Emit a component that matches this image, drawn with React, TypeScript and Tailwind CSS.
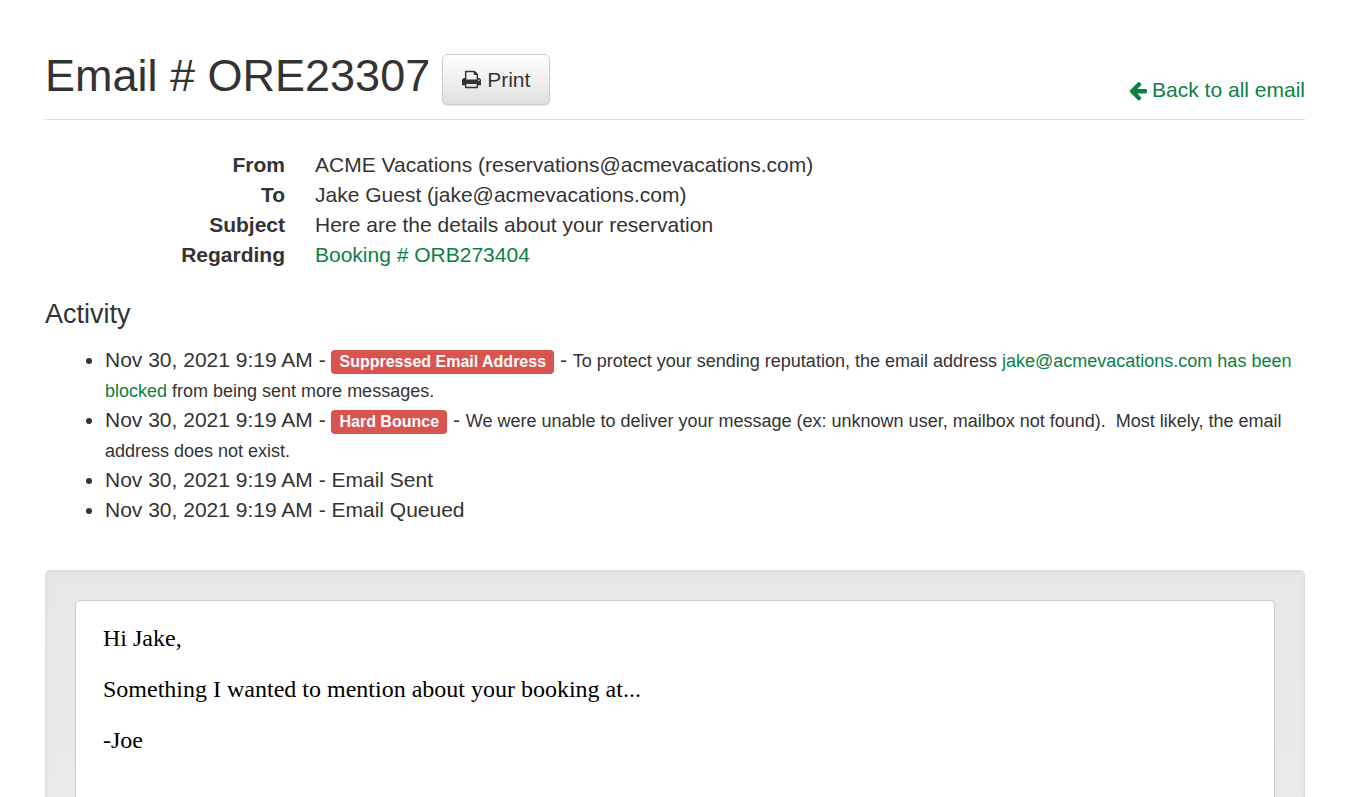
import React from 'react';

type Detail = {
  label: string;
  value: string;
  href?: string;
};

const details: Detail[] = [
  { label: 'From', value: 'ACME Vacations (reservations@acmevacations.com)' },
  { label: 'To', value: 'Jake Guest (jake@acmevacations.com)' },
  { label: 'Subject', value: 'Here are the details about your reservation' },
  { label: 'Regarding', value: 'Booking # ORB273404', href: '#booking' },
];

function PrintIcon() {
  return (
    <svg viewBox="64 0 1664 1792" className="h-[21px] w-[19px] fill-current" aria-hidden="true">
      <path d="M448 1536h896v-256h-896v256zm0-640h896v-384h-160q-40 0-68-28t-28-68v-160h-640v640zm1152 64q0-26-19-45t-45-19-45 19-19 45 19 45 45 19 45-19 19-45zm128 0v416q0 13-9.5 22.5t-22.5 9.5h-224v160q0 40-28 68t-68 28h-960q-40 0-68-28t-28-68v-160h-224q-13 0-22.5-9.5t-9.5-22.5v-416q0-79 56.5-135.5t135.5-56.5h64v-544q0-40 28-68t68-28h672q40 0 88 20t76 48l152 152q28 28 48 76t20 88v256h64q79 0 135.5 56.5t56.5 135.5z" />
    </svg>
  );
}

function ArrowLeftIcon() {
  return (
    <svg viewBox="128 0 1536 1792" className="h-[21px] w-[18px] fill-current" aria-hidden="true">
      <path d="M1664 896v128q0 53-32.5 90.5t-84.5 37.5h-704l293 294q38 36 38 90t-38 90l-75 76q-37 37-90 37-52 0-91-37l-651-652q-37-37-37-90 0-52 37-91l651-650q38-38 91-38 52 0 90 38l75 74q38 38 38 91t-38 91l-293 293h704q52 0 84.5 37.5t32.5 90.5z" />
    </svg>
  );
}

function Badge({ children }: { children: React.ReactNode }) {
  return (
    <span className="rounded-[4px] bg-[#d9534f] px-[8px] pt-[3px] pb-[4px] text-[16px] leading-none font-bold text-white">
      {children}
    </span>
  );
}

export default function App() {
  return (
    <div className="min-h-screen bg-white pt-[47px] pr-[44px] pl-[45px] font-['Liberation_Sans',Arial,sans-serif] text-[21px] leading-[30px] text-[#333]">
      <header className="flex items-end justify-between border-b border-[#ddd] pb-[14px]">
        <div className="flex items-end gap-[12px]">
          <h1 className="text-[45px] leading-[58px]">Email # ORE23307</h1>
          <button
            type="button"
            onClick={() => window.print()}
            className="flex h-[51px] items-center gap-[6px] rounded-[5px] border border-[#ccc] bg-linear-to-b from-white to-[#e0e0e0] px-[19px] shadow-[0_1px_2px_rgba(0,0,0,0.1)] [text-shadow:0_1px_1px_rgba(255,255,255,0.75)]"
          >
            <PrintIcon />
            Print
          </button>
        </div>
        <a href="#emails" className="flex items-center gap-[5px] text-[#0c8043]">
          <ArrowLeftIcon />
          Back to all email
        </a>
      </header>

      <dl className="mt-[30px]">
        {details.map((item) => (
          <div key={item.label} className="flex gap-[30px]">
            <dt className="w-[240px] text-right font-bold">{item.label}</dt>
            <dd>
              {item.href ? <a href={item.href} className="text-[#0c8043]">{item.value}</a> : item.value}
            </dd>
          </div>
        ))}
      </dl>

      <h2 className="mt-[28px] text-[27px] leading-[32px]">Activity</h2>
      <ul className="mt-[15px] list-disc pl-[60px]">
        <li>
          Nov 30, 2021 9:19 AM - <Badge>Suppressed Email Address</Badge> -{' '}
          <span className="text-[18px] leading-none">
            To protect your sending reputation, the email address{' '}
            <a href="#blocked" className="text-[#0c8043]">jake@acmevacations.com has been blocked</a> from
            being sent more messages.
          </span>
        </li>
        <li>
          Nov 30, 2021 9:19 AM - <Badge>Hard Bounce</Badge> -{' '}
          <span className="text-[18px] leading-none">
            We were unable to deliver your message (ex: unknown user, mailbox not found).&nbsp; Most
            likely, the email address does not exist.
          </span>
        </li>
        <li>Nov 30, 2021 9:19 AM - Email Sent</li>
        <li>Nov 30, 2021 9:19 AM - Email Queued</li>
      </ul>

      {/* Message preview */}
      <section className="mt-[45px] rounded-[5px] border border-[#dcdcdc] bg-linear-to-b from-[#e7e7e7] to-[#ececec] p-[29px] shadow-[inset_0_1px_5px_rgba(0,0,0,0.05)]">
        <div className="min-h-[300px] rounded-[5px] border border-[#ccc] bg-white px-[27px] pt-[24px] font-['Liberation_Serif','Times_New_Roman',serif] text-[24px] leading-[27px] text-black">
          <p className="mb-[24px]">Hi Jake,</p>
          <p className="mb-[24px]">Something I wanted to mention about your booking at...</p>
          <p>-Joe</p>
        </div>
      </section>
    </div>
  );
}
